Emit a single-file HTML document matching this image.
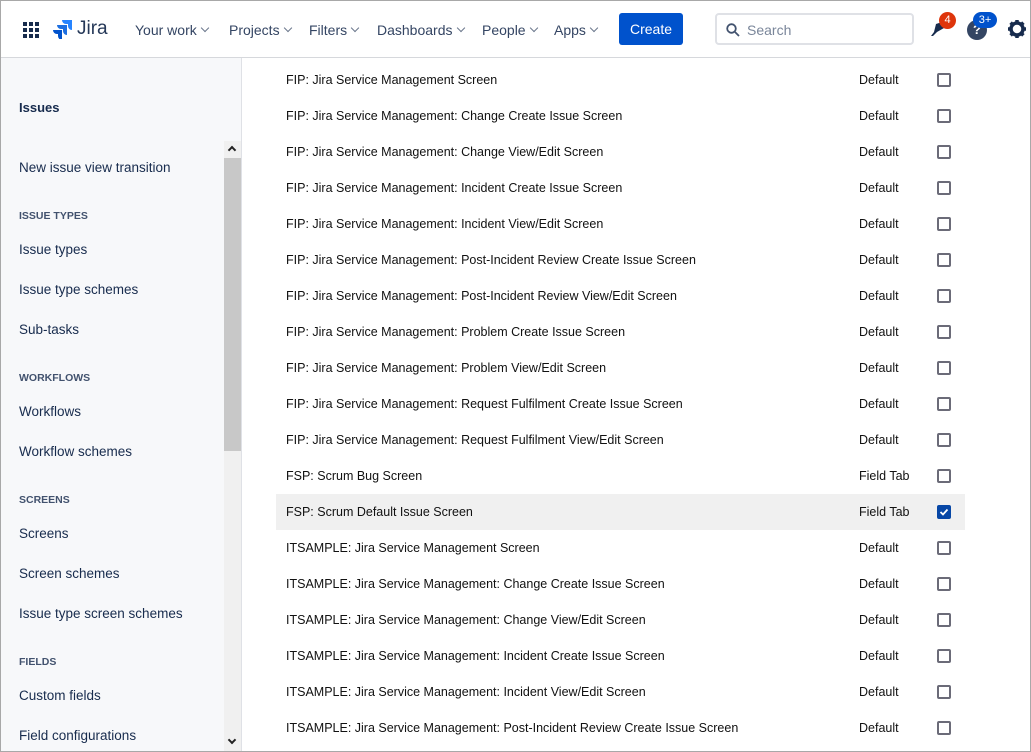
<!DOCTYPE html>
<html><head><meta charset="utf-8"><style>
*{box-sizing:border-box;margin:0;padding:0}
body{width:1031px;height:752px;overflow:hidden;font-family:"Liberation Sans",sans-serif;color:#172b4d;background:#fff;position:relative}
.frame{position:absolute;inset:0;border:1px solid #a8a8a8;pointer-events:none;z-index:10}
.hdr{position:absolute;left:0;top:0;width:1031px;height:58px;border-bottom:1px solid #d6d8dc;background:#fff}
.nav{position:absolute;top:22px;font-size:14px;color:#344563}
.nav span.c{display:inline-block;width:6px;height:6px;border-right:1.5px solid #6b778c;border-bottom:1.5px solid #6b778c;transform:rotate(45deg);margin-left:5px;position:relative;top:-4px}
.side{position:absolute;left:0;top:58px;width:242px;height:694px;background:#f7f8fa;border-right:1px solid #dfe1e6}
.si{position:absolute;left:19px;font-size:13.5px;color:#172b4d}
.sh{position:absolute;left:19px;font-size:10.5px;font-weight:bold;color:#42526e}
.row{position:absolute;left:276px;width:689px;height:36px}
.row .t{position:absolute;left:10px;top:11px;font-size:12.5px;color:#111}
.row .d{position:absolute;left:583px;top:11px;font-size:12.5px;color:#111}
.row .cb{position:absolute;left:661px;top:11px;width:14px;height:14px;border:2px solid #6b6b78;border-radius:2px;background:#fff}
</style></head><body>
<div class="hdr">
 <svg style="position:absolute;left:23px;top:22px" width="16" height="16"><g fill="#172b4d"><rect x="0" y="0" width="4" height="4"/><rect x="6" y="0" width="4" height="4"/><rect x="12" y="0" width="4" height="4"/><rect x="0" y="6" width="4" height="4"/><rect x="6" y="6" width="4" height="4"/><rect x="12" y="6" width="4" height="4"/><rect x="0" y="12" width="4" height="4"/><rect x="6" y="12" width="4" height="4"/><rect x="12" y="12" width="4" height="4"/></g></svg>
 <svg style="position:absolute;left:53px;top:20px" width="20" height="19" viewBox="0 0 20 19"><path d="M19 0H9a4 4 0 0 0 4 4h2v2a4 4 0 0 0 4 4z" fill="#2684ff"/><path d="M14 5H4a4 4 0 0 0 4 4h2v2a4 4 0 0 0 4 4z" fill="#1d6fe0"/><path d="M9 10H0a4 4 0 0 0 4 4h1v2a4 4 0 0 0 4 4z" fill="#0052cc"/></svg>
 <div style="position:absolute;left:77px;top:18px;font-size:19px;color:#253858">Jira</div>
 <div class="nav" style="left:135px">Your work<span class="c"></span></div>
 <div class="nav" style="left:229px">Projects<span class="c"></span></div>
 <div class="nav" style="left:309px">Filters<span class="c"></span></div>
 <div class="nav" style="left:377px">Dashboards<span class="c"></span></div>
 <div class="nav" style="left:482px">People<span class="c"></span></div>
 <div class="nav" style="left:554px">Apps<span class="c"></span></div>
 <div style="position:absolute;left:619px;top:13px;width:64px;height:32px;background:#0052cc;border-radius:3px;color:#fff;font-size:14px;text-align:center;line-height:33px">Create</div>
 <div style="position:absolute;left:715px;top:13px;width:199px;height:32px;border:2px solid #dfe1e6;border-radius:4px"><svg style="position:absolute;left:9px;top:8px" width="14" height="14"><circle cx="5.5" cy="5.5" r="4.3" fill="none" stroke="#42526e" stroke-width="1.8"/><path d="M9 9l4 4" stroke="#42526e" stroke-width="1.8"/></svg><span style="position:absolute;left:30px;top:7px;font-size:14px;color:#7a869a">Search</span></div>
 <svg style="position:absolute;left:928px;top:20px" width="18" height="18"><path d="M3 16l3-4 2-8 6-2 2 6-7 4-4 4z" fill="#172b4d"/></svg>
 <div style="position:absolute;left:939px;top:12px;width:17px;height:17px;border-radius:50%;background:#de350b;color:#fff;font-size:11px;text-align:center;line-height:17px">4</div>
 <div style="position:absolute;left:967px;top:20px;width:20px;height:20px;border-radius:50%;background:#344563;color:#fff;font-size:13px;font-weight:bold;text-align:center;line-height:20px">?</div>
 <div style="position:absolute;left:973px;top:12px;width:24px;height:16px;border-radius:8px;background:#0052cc;color:#fff;font-size:11px;text-align:center;line-height:16px">3+</div>
 <svg style="position:absolute;left:1007px;top:19px" width="20" height="20" viewBox="0 0 20 20"><circle cx="10" cy="10" r="6" fill="none" stroke="#172b4d" stroke-width="3.5"/><g stroke="#172b4d" stroke-width="3.5"><path d="M10 1v4M10 15v4M1 10h4M15 10h4M3.6 3.6l2.8 2.8M13.6 13.6l2.8 2.8M3.6 16.4l2.8-2.8M13.6 6.4l2.8-2.8"/></g></svg>
</div>
<div class="side">
 <div class="si" style="top:42px;font-weight:bold;font-size:13px">Issues</div>
 <div class="si" style="top:102px">New issue view transition</div>
 <div class="sh" style="top:152px">ISSUE TYPES</div>
 <div class="si" style="top:184px">Issue types</div>
 <div class="si" style="top:224px">Issue type schemes</div>
 <div class="si" style="top:264px">Sub-tasks</div>
 <div class="sh" style="top:314px">WORKFLOWS</div>
 <div class="si" style="top:346px">Workflows</div>
 <div class="si" style="top:386px">Workflow schemes</div>
 <div class="sh" style="top:436px">SCREENS</div>
 <div class="si" style="top:468px">Screens</div>
 <div class="si" style="top:508px">Screen schemes</div>
 <div class="si" style="top:548px">Issue type screen schemes</div>
 <div class="sh" style="top:598px">FIELDS</div>
 <div class="si" style="top:630px">Custom fields</div>
 <div class="si" style="top:670px">Field configurations</div>
 <div style="position:absolute;left:224px;top:83px;width:17px;height:611px;background:#f0f0f0"></div>
 <div style="position:absolute;left:224px;top:100px;width:17px;height:293px;background:#c8c8c8"></div>
 <div style="position:absolute;left:229px;top:89px;width:6px;height:6px;border-left:2px solid #222;border-top:2px solid #222;transform:rotate(45deg)"></div>
 <div style="position:absolute;left:229px;top:679px;width:6px;height:6px;border-right:2px solid #222;border-bottom:2px solid #222;transform:rotate(45deg)"></div>
</div>
<div class="row" style="top:62px"><span class="t">FIP: Jira Service Management Screen</span><span class="d">Default</span><span class="cb"></span></div>
<div class="row" style="top:98px"><span class="t">FIP: Jira Service Management: Change Create Issue Screen</span><span class="d">Default</span><span class="cb"></span></div>
<div class="row" style="top:134px"><span class="t">FIP: Jira Service Management: Change View/Edit Screen</span><span class="d">Default</span><span class="cb"></span></div>
<div class="row" style="top:170px"><span class="t">FIP: Jira Service Management: Incident Create Issue Screen</span><span class="d">Default</span><span class="cb"></span></div>
<div class="row" style="top:206px"><span class="t">FIP: Jira Service Management: Incident View/Edit Screen</span><span class="d">Default</span><span class="cb"></span></div>
<div class="row" style="top:242px"><span class="t">FIP: Jira Service Management: Post-Incident Review Create Issue Screen</span><span class="d">Default</span><span class="cb"></span></div>
<div class="row" style="top:278px"><span class="t">FIP: Jira Service Management: Post-Incident Review View/Edit Screen</span><span class="d">Default</span><span class="cb"></span></div>
<div class="row" style="top:314px"><span class="t">FIP: Jira Service Management: Problem Create Issue Screen</span><span class="d">Default</span><span class="cb"></span></div>
<div class="row" style="top:350px"><span class="t">FIP: Jira Service Management: Problem View/Edit Screen</span><span class="d">Default</span><span class="cb"></span></div>
<div class="row" style="top:386px"><span class="t">FIP: Jira Service Management: Request Fulfilment Create Issue Screen</span><span class="d">Default</span><span class="cb"></span></div>
<div class="row" style="top:422px"><span class="t">FIP: Jira Service Management: Request Fulfilment View/Edit Screen</span><span class="d">Default</span><span class="cb"></span></div>
<div class="row" style="top:458px"><span class="t">FSP: Scrum Bug Screen</span><span class="d">Field Tab</span><span class="cb"></span></div>
<div class="row" style="top:494px;background:#f0f0f0"><span class="t">FSP: Scrum Default Issue Screen</span><span class="d">Field Tab</span><span class="cb" style="background:#0747a6;border-color:#0747a6"><svg width="10" height="10" style="position:absolute;left:0;top:0"><path d="M1.5 5l2.5 2.5 4.5-5" fill="none" stroke="#fff" stroke-width="1.8"/></svg></span></div>
<div class="row" style="top:530px"><span class="t">ITSAMPLE: Jira Service Management Screen</span><span class="d">Default</span><span class="cb"></span></div>
<div class="row" style="top:566px"><span class="t">ITSAMPLE: Jira Service Management: Change Create Issue Screen</span><span class="d">Default</span><span class="cb"></span></div>
<div class="row" style="top:602px"><span class="t">ITSAMPLE: Jira Service Management: Change View/Edit Screen</span><span class="d">Default</span><span class="cb"></span></div>
<div class="row" style="top:638px"><span class="t">ITSAMPLE: Jira Service Management: Incident Create Issue Screen</span><span class="d">Default</span><span class="cb"></span></div>
<div class="row" style="top:674px"><span class="t">ITSAMPLE: Jira Service Management: Incident View/Edit Screen</span><span class="d">Default</span><span class="cb"></span></div>
<div class="row" style="top:710px"><span class="t">ITSAMPLE: Jira Service Management: Post-Incident Review Create Issue Screen</span><span class="d">Default</span><span class="cb"></span></div>
<div class="frame"></div>
</body></html>
